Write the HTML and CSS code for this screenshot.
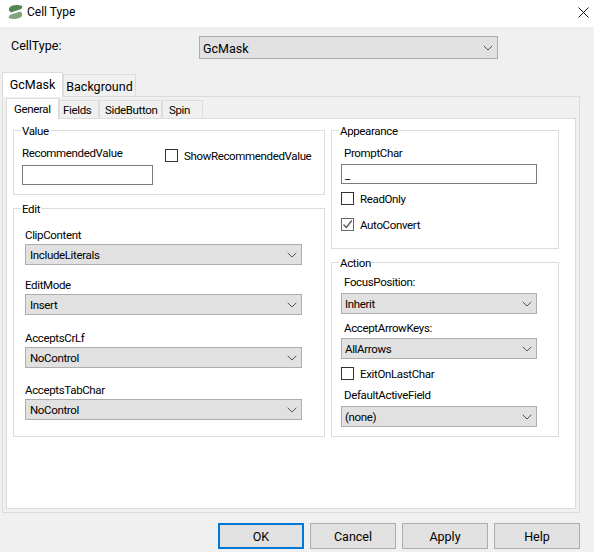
FILE: index.html
```html
<!DOCTYPE html>
<html lang="en">
<head>
<meta charset="utf-8">
<title>Cell Type</title>
<link rel="stylesheet" href="styles.css">
</head>
<body>
<svg width="0" height="0" class="defs" aria-hidden="true">
  <symbol id="chev" viewBox="0 0 10 6"><path d="M.7.8 5 5 9.3.8" fill="none" stroke="#555" stroke-width="1"/></symbol>
</svg>
<div class="window">
  <header class="titlebar">
    <svg class="logo" viewBox="0 0 15 14" width="15" height="14" aria-hidden="true">
      <path d="M14 .8C9.500-.5 3.500 0 1.500 2.500 .2 4.300 1 6.500 3 7.500L12.500 4.200C14 3.600 14.600 1.800 14 .8Z" fill="#558552"/>
      <path d="M1 13.200C5.500 14.500 11.500 14 13.500 11.500 14.800 9.700 14 7.500 12 6.500L2.500 9.800C1 10.400.4 12.200 1 13.200Z" fill="#7fa37b"/>
    </svg>
    <span class="title">Cell Type</span>
    <svg class="close" viewBox="0 0 11 11" width="11" height="11" aria-hidden="true"><path d="M.5.5l10 10M10.500.5l-10 10" stroke="#111" stroke-width="1" fill="none"/></svg>
  </header>
  <main class="client">
    <div class="type-row">
      <span class="type-label">CellType:</span>
      <div class="combo combo-type"><span>GcMask</span><svg class="chev"><use href="#chev"/></svg></div>
    </div>
    <div class="tabs outer-tabs">
      <div class="tab outer-tab active">GcMask</div>
      <div class="tab outer-tab">Background</div>
    </div>
    <div class="outer-panel">
      <div class="tabs inner-tabs">
        <div class="tab inner-tab active">General</div>
        <div class="tab inner-tab tab-fields">Fields</div>
        <div class="tab inner-tab tab-side">SideButton</div>
        <div class="tab inner-tab tab-spin">Spin</div>
      </div>
      <div class="inner-panel">
        <div class="column column-left">
          <fieldset class="group">
            <legend>Value</legend>
            <div class="value-body">
              <div class="value-col">
                <span class="lbl">RecommendedValue</span>
                <div class="input input-value"></div>
              </div>
              <label class="check check-show"><span class="box"></span><span>ShowRecommendedValue</span></label>
            </div>
          </fieldset>
          <fieldset class="group">
            <legend>Edit</legend>
            <div class="edit-body">
              <span class="lbl">ClipContent</span>
              <div class="combo"><span>IncludeLiterals</span><svg class="chev"><use href="#chev"/></svg></div>
              <span class="lbl mt-12">EditMode</span>
              <div class="combo"><span>Insert</span><svg class="chev"><use href="#chev"/></svg></div>
              <span class="lbl mt-15">AcceptsCrLf</span>
              <div class="combo"><span>NoControl</span><svg class="chev"><use href="#chev"/></svg></div>
              <span class="lbl mt-14">AcceptsTabChar</span>
              <div class="combo"><span>NoControl</span><svg class="chev"><use href="#chev"/></svg></div>
            </div>
          </fieldset>
        </div>
        <div class="column column-right">
          <fieldset class="group">
            <legend>Appearance</legend>
            <div class="appearance-body">
              <span class="lbl lbl-in">PromptChar</span>
              <div class="input input-prompt">_</div>
              <label class="check mt-8"><span class="box"></span><span>ReadOnly</span></label>
              <label class="check mt-13"><span class="box checked"><svg viewBox="0 0 11 11" width="11" height="11" aria-hidden="true"><path d="M1.500 5.500 4.300 8.500 9.800 1.500" fill="none" stroke="#555" stroke-width="1.300"/></svg></span><span>AutoConvert</span></label>
            </div>
          </fieldset>
          <fieldset class="group">
            <legend>Action</legend>
            <div class="action-body">
              <span class="lbl lbl-in">FocusPosition:</span>
              <div class="combo mt-2"><span>Inherit</span><svg class="chev"><use href="#chev"/></svg></div>
              <span class="lbl lbl-in mt-6">AcceptArrowKeys:</span>
              <div class="combo mt-1"><span>AllArrows</span><svg class="chev"><use href="#chev"/></svg></div>
              <label class="check mt-8"><span class="box"></span><span>ExitOnLastChar</span></label>
              <span class="lbl lbl-in mt-7">DefaultActiveField</span>
              <div class="combo mt-2"><span>(none)</span><svg class="chev"><use href="#chev"/></svg></div>
            </div>
          </fieldset>
        </div>
      </div>
    </div>
    <footer class="footer">
      <button class="btn btn-default" type="button">OK</button>
      <button class="btn" type="button">Cancel</button>
      <button class="btn" type="button">Apply</button>
      <button class="btn" type="button">Help</button>
    </footer>
  </main>
</div>
</body>
</html>
```
FILE: styles.css
```css
* { box-sizing: border-box; }
html, body { margin: 0; padding: 0; background: #f0f0f0; }
body { font: 12.5px/17px Roboto, "Open Sans", sans-serif; color: #000; overflow: hidden; }
.defs { position: absolute; }

.window { width: 594px; height: 552px; display: flex; flex-direction: column; }
.titlebar { height: 27px; background: #fff; display: flex; align-items: center; padding: 0 5px 3px 8px; }
.logo { flex: none; }
.title { margin-left: 4px; font-size: 12px; }
.close { margin-left: auto; }

.client { flex: 1; display: flex; flex-direction: column; padding: 0 14px 0 2px; }

.type-row { height: 46px; display: flex; padding-top: 9px; }
.type-label { width: 197px; padding: 1px 0 0 9px; line-height: 17px; }
.combo { height: 21px; background: #e1e1e1; border: 1px solid #adadad; display: flex; align-items: center; justify-content: space-between; padding: 2px 4px 0 3px; line-height: 17px; }
.combo .chev { margin-top: -2px; }
.combo-type { width: 299px; height: 23px; }
.chev { width: 10px; height: 6px; flex: none; }

.tabs { display: flex; align-items: flex-end; position: relative; }
.tab { background: #f0f0f0; border: 1px solid #dcdcdc; border-bottom: 0; text-align: center; }
.tab.active { background: #fff; }
.outer-tabs { height: 24px; margin-bottom: -1px; z-index: 1; }
.outer-tab { width: 73px; height: 22px; line-height: 22px; padding-top: 1px; margin-bottom: 1px; }
.outer-tab.active { width: 61px; height: 25px; line-height: 23px; padding-top: 0; margin-bottom: 0; }
.outer-panel { height: 417px; border: 1px solid #dcdcdc; padding: 1px 3px 3px; font-size: 11.500px; letter-spacing: -0.35px; }
.inner-tabs { height: 21px; margin-bottom: -1px; z-index: 1; }
.inner-tab { height: 18px; line-height: 17px; padding-top: 1px; margin-bottom: 1px; text-align: left; }
.inner-tab.active { width: 53px; height: 21px; line-height: 18px; padding: 1px 0 0 7px; margin-bottom: 0; }
.tab-fields { width: 40px; padding-left: 3px; }
.tab-side { width: 63px; padding-left: 5px; }
.tab-spin { width: 41px; padding-left: 6px; }
.inner-panel { height: 391px; background: #fff; border: 1px solid #dcdcdc; display: grid; grid-template-columns: 312px 228px; column-gap: 6px; align-content: start; padding: 3px 0 0 6px; }

.column { display: flex; flex-direction: column; gap: 5px; }
.group { margin: 0; padding: 0; min-width: 0; border: 1px solid #dcdcdc; }
.group legend { margin-left: 7px; padding: 2px 1px 0; line-height: 15px; }

.lbl { display: block; line-height: 17px; }
.lbl-in { padding-left: 3px; }
.input { height: 20px; background: #fff; border: 1px solid #7a7a7a; line-height: 21px; padding-left: 3px; }
.input-value { width: 131px; margin-top: 3px; }
.input-prompt { margin-top: 2px; }

.value-body { display: flex; padding: 6px 0 9px 8px; gap: 12px; }
.check { display: flex; align-items: center; gap: 6px; height: 13px; line-height: 13px; }
.check > span:last-child { margin-top: 2px; }
.check-show { margin-top: 4px; }
.box { width: 13px; height: 13px; flex: none; background: #fff; border: 1px solid #333; display: flex; }
.box.checked { border-color: #666; }

.edit-body { padding: 10px 22px 16px 11px; }
.edit-body .combo { padding-left: 4px; }
.appearance-body { padding: 6px 21px 17px 9px; }
.action-body { padding: 3px 21px 9px 9px; }

.mt-1 { margin-top: 1px; }
.mt-2 { margin-top: 2px; }
.mt-6 { margin-top: 6px; }
.mt-7 { margin-top: 7px; }
.mt-8 { margin-top: 8px; }
.mt-12 { margin-top: 12px; }
.mt-13 { margin-top: 13px; }
.mt-14 { margin-top: 14px; }
.mt-15 { margin-top: 15px; }

.footer { display: flex; justify-content: flex-end; gap: 6px; padding-top: 10px; }
.btn { width: 86px; height: 26px; padding: 0; background: #e1e1e1; border: 1px solid #adadad; border-radius: 0; color: #000; font: inherit; }
.btn-default { border: 2px solid #0078d7; }
```
